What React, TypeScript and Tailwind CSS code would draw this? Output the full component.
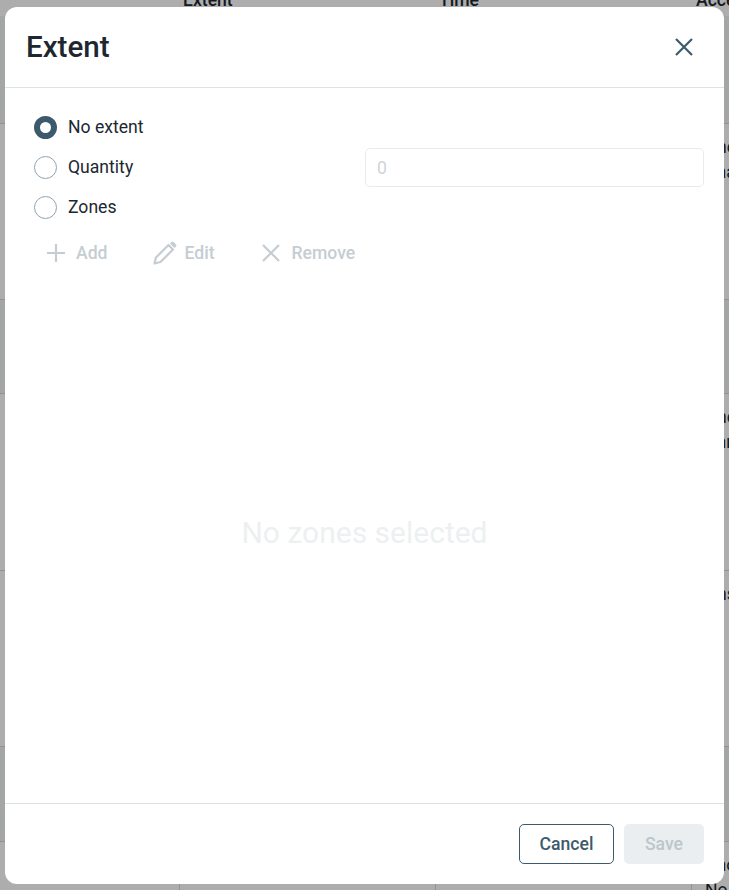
const rows = [
  { h: "h-[176px]", bg: "bg-white", text: "One\nAna" },
  { h: "h-[94px]", bg: "bg-[#f1f3f5]", text: "" },
  { h: "h-[177px]", bg: "bg-white", text: "One\nAnn" },
  { h: "h-[176px]", bg: "bg-white", text: "Ons" },
  { h: "h-[95px]", bg: "bg-[#f1f3f5]", text: "" },
  { h: "h-[49px]", bg: "bg-white", text: "Ano\nNo" },
];

function Radio({ label, checked }: { label: string; checked?: boolean }) {
  return (
    <label className="flex items-center gap-[11px] h-10">
      {checked ? (
        <span className="w-[23px] h-[23px] rounded-full border-[6px] border-[#3d5a6c] bg-white" />
      ) : (
        <span className="w-[23px] h-[23px] rounded-full border border-[#8fa3af] bg-white" />
      )}
      <span className="text-[17.6px] text-[#1c2730]">{label}</span>
    </label>
  );
}

function PlusIcon() {
  return (
    <svg width="18" height="18" viewBox="0 0 18 18" fill="none" stroke="currentColor" strokeWidth="2.2">
      <path d="M9 0V18M0 9H18" />
    </svg>
  );
}

function CrossIcon({ className }: { className?: string }) {
  return (
    <svg width="18" height="18" viewBox="0 0 18 18" fill="none" stroke="currentColor" strokeWidth="2.2" className={className}>
      <path d="M1 1L17 17M17 1L1 17" />
    </svg>
  );
}

function PencilIcon() {
  return (
    <svg width="24" height="24" viewBox="0 0 24 24" fill="none">
      <path d="M1.5 22.5 L3 16.5 L15.5 4 L20 8.5 L7.5 21 Z" stroke="currentColor" strokeWidth="2.2" strokeLinejoin="round" />
      <path d="M17 2.5 L18.5 1 Q19.5 0 20.5 1 L23 3.5 Q24 4.5 23 5.5 L21.5 7 Z" fill="currentColor" />
    </svg>
  );
}

export default function App() {
  return (
    <div className="relative h-[890px] w-[729px] overflow-hidden bg-white font-['Roboto',sans-serif]">
      {/* table behind the dialog */}
      <div className="flex flex-col">
        <div className="h-[124px] flex flex-col border-b border-[#d5d8da]">
          <div className="h-4 bg-white grid grid-cols-[180px_256px_256px_1fr] text-[17.6px] font-medium text-[#1c2730] leading-none">
            <span />
            <span className="pl-[3px] -mt-[8px]">Extent</span>
            <span className="pl-[3px] -mt-[8px]">Time</span>
            <span className="pl-[4px] -mt-[8px] whitespace-nowrap">Access</span>
          </div>
          <div className="flex-1 bg-[#f1f3f5]" />
        </div>
        {rows.map((r, i) => (
          <div
            key={i}
            className={`${r.h} ${r.bg} border-b border-[#d5d8da] grid grid-cols-[180px_256px_256px_1fr] overflow-hidden`}
          >
            <div className="border-r border-[#d5d8da]" />
            <div className="border-r border-[#d5d8da]" />
            <div className="border-r border-[#d5d8da]" />
            <div className="pl-[13px] pt-[11px] whitespace-pre text-[17.6px] leading-[25px] text-[#1c2730]">{r.text}</div>
          </div>
        ))}
      </div>

      {/* overlay + dialog */}
      <div className="absolute inset-0 bg-black/[0.32] pl-[5px] pt-[7px]">
        <div className="w-[719px] h-[877px] bg-white rounded-xl flex flex-col overflow-hidden">
          <div className="h-[81px] shrink-0 border-b border-[#dfe2e4] flex items-center justify-between pl-[21px] pr-[31px]">
            <h2 className="pt-[2px] text-[29.6px] font-medium text-[#1c2730] leading-none">Extent</h2>
            <CrossIcon className="text-[#3d5a6c]" />
          </div>

          <div className="flex-1 flex flex-col pt-[19px] pb-3">
            <div className="pl-[29px]">
              <Radio label="No extent" checked />
              <div className="flex items-center justify-between pr-5">
                <Radio label="Quantity" />
                <input
                  disabled
                  placeholder="0"
                  className="w-[339px] h-[39px] border border-[#e8ebed] rounded-[5px] pl-[11px] pr-[11px] pt-[2px] text-[17.6px] bg-white placeholder:text-[#cfd4d8]"
                />
              </div>
              <Radio label="Zones" />
            </div>

            <div className="flex items-center h-10 mt-[6px] pl-[42px] text-[17.6px] font-medium text-[#c5cdd3]">
              <div className="flex items-center gap-[11px]">
                <PlusIcon />
                <span>Add</span>
              </div>
              <div className="flex items-center gap-[8px] ml-[45px]">
                <PencilIcon />
                <span>Edit</span>
              </div>
              <div className="flex items-center gap-[12px] ml-[47px]">
                <CrossIcon />
                <span>Remove</span>
              </div>
            </div>

            <div className="flex-1 flex items-center justify-center text-[30px] text-[#edf0f1]">
              No zones selected
            </div>
          </div>

          <div className="h-[81px] shrink-0 border-t border-[#dfe2e4] flex items-start justify-end gap-[10px] pt-5 pr-5">
            <button className="w-[95px] h-10 rounded-[5px] border border-[#3d5a6c] text-[17.6px] font-medium text-[#3d5a6c]">
              Cancel
            </button>
            <button className="w-20 h-10 rounded-[5px] bg-[#ebeef0] text-[17.6px] font-medium text-[#bcc6cc]">
              Save
            </button>
          </div>
        </div>
      </div>
    </div>
  );
}
